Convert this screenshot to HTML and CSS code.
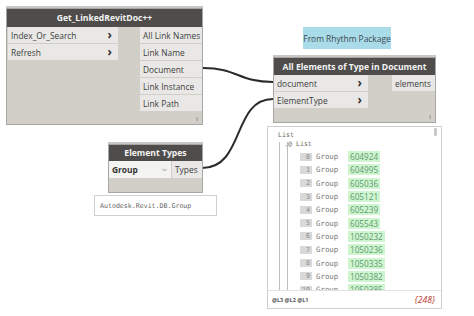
FILE: index.html
```html
<!DOCTYPE html>
<html lang="en">
<head>
  <meta charset="UTF-8" />
  <title>Dynamo Graph</title>
  <link rel="stylesheet" href="styles.css">
</head>
<body>
  <div class="canvas">
    <svg class="wires" width="474" height="316">
      <path d="M203,68 C238,68 238,82 273,82" />
      <path d="M202,168 C245,168 232,99 273,99" />
    </svg>

    <div class="note note-rhythm">From Rhythm Package</div>

    <div class="node node-linked">
      <div class="node-head">Get_LinkedRevitDoc++</div>
      <div class="node-body">
        <div class="ports-in">
          <div class="port-in">Index_Or_Search <span class="chev">&#x203A;</span></div>
          <div class="port-in">Refresh <span class="chev">&#x203A;</span></div>
        </div>
        <div class="ports-out">
          <div class="port-out">All Link Names</div>
          <div class="port-out">Link Name</div>
          <div class="port-out">Document</div>
          <div class="port-out">Link Instance</div>
          <div class="port-out">Link Path</div>
        </div>
      </div>
      <div class="lace">I</div>
    </div>

    <div class="node node-elements">
      <div class="node-head">All Elements of Type in Document</div>
      <div class="node-body">
        <div class="ports-in">
          <div class="port-in">document <span class="chev">&#x203A;</span></div>
          <div class="port-in">ElementType <span class="chev">&#x203A;</span></div>
        </div>
        <div class="ports-out">
          <div class="port-out">elements</div>
        </div>
      </div>
      <div class="lace">I</div>
    </div>

    <div class="node node-types">
      <div class="node-head">Element Types</div>
      <div class="node-body">
        <div class="dropdown">Group
          <svg class="caret" width="5" height="4" viewBox="0 0 5 4"><path d="M0.5,0.8 L2.5,3 L4.5,0.8" /></svg>
        </div>
        <div class="port-out">Types</div>
      </div>
    </div>
    <div class="preview preview-types">Autodesk.Revit.DB.Group</div>

    <div class="watch">
      <div class="watch-list">
        <div class="tree-line line-a"></div>
        <div class="tree-line line-b"></div>
        <div class="list-title">List</div>
        <div class="list-sub"><span class="toggle">&#x2304;</span>@ List</div>
        <div class="items" id="items"></div>
      </div>
      <div class="scroll-thumb"></div>
      <div class="watch-foot">
        <span class="levels">@L3 @L2 @L1</span>
        <span class="count">{248}</span>
      </div>
    </div>
  </div>

  <script>
    const ids = [604924, 604995, 605036, 605121, 605239, 605543, 1050232, 1050236, 1050335, 1050382, 1050385];
    const itemsEl = document.getElementById("items");

    ids.forEach((id, i) => {
      const row = document.createElement("div");
      row.className = "item";
      row.innerHTML = `
        <span class="idx">${i}</span>
        <span class="kind">Group</span>
        <span class="val">${id}</span>
      `;
      itemsEl.appendChild(row);
    });
  </script>
</body>
</html>
```

FILE: styles.css
```css
body {
  margin: 0;
  background: #fff;
  font-family: "Open Sans", "Noto Sans", sans-serif;
}

.canvas {
  position: relative;
  width: 474px;
  height: 316px;
  overflow: hidden;
}

.wires {
  position: absolute;
  left: 0;
  top: 0;
}

.wires path {
  fill: none;
  stroke: #2b2b2b;
  stroke-width: 2;
}

.note {
  position: absolute;
  background: #a9dbe9;
  color: #3b4a50;
  font-size: 8.4px;
  display: flex;
  align-items: center;
  justify-content: center;
}

.note-rhythm {
  left: 303px;
  top: 27px;
  width: 88px;
  height: 22px;
}

/* nodes */
.node {
  position: absolute;
  background: #d2cec8;
  border: 1px solid #a8a6a2;
  box-shadow: 0 -2px 0 #c9c7c4;
  display: flex;
  flex-direction: column;
}

.node-head {
  background: #4f4d4b;
  color: #f3f3f3;
  font-weight: bold;
  font-size: 8.6px;
  height: 17px;
  display: flex;
  align-items: center;
  justify-content: center;
  white-space: nowrap;
}

.node-body {
  display: flex;
  justify-content: space-between;
  align-items: flex-start;
}

.ports-in,
.ports-out {
  display: flex;
  flex-direction: column;
  gap: 1px;
}

.port-in,
.port-out {
  background: #e9e8e6;
  color: #404040;
  font-size: 8.4px;
  height: 16px;
  display: flex;
  align-items: center;
  white-space: nowrap;
}

.port-in {
  justify-content: space-between;
  padding: 0 6px 0 3px;
}

.port-out {
  padding: 0 3px;
}

.chev {
  font-weight: bold;
  font-size: 12px;
  color: #333;
  line-height: 1;
}

.lace {
  position: absolute;
  right: 4px;
  bottom: 1px;
  font-size: 6px;
  color: #555;
}

.node-linked {
  left: 6px;
  top: 8px;
  width: 195px;
  height: 115px;
}

.node-linked .node-head {
  height: 18px;
}

.node-linked .ports-in {
  width: 110px;
  padding-left: 1px;
}

.node-linked .ports-out {
  width: 62px;
}

.node-elements {
  left: 273px;
  top: 57px;
  width: 161px;
  height: 64px;
}

.node-elements .ports-in {
  width: 94px;
}

.node-elements .ports-out {
  width: 43px;
}

.node-types {
  left: 108px;
  top: 144px;
  width: 93px;
  height: 47px;
}

.node-types .node-head {
  height: 16px;
}

.dropdown {
  background: #f3f3f2;
  color: #333;
  font-weight: bold;
  font-size: 8.4px;
  height: 17px;
  width: 62px;
  padding: 0 4px 0 3px;
  display: flex;
  align-items: center;
  justify-content: space-between;
  box-sizing: border-box;
}

.caret path {
  fill: none;
  stroke: #999;
  stroke-width: 1;
}

.node-types .port-out {
  height: 17px;
  margin-left: 1px;
  flex: 1;
}

.preview {
  position: absolute;
  border: 1px solid #cfcfcf;
  background: #fff;
  font-family: "DejaVu Sans Mono", monospace;
  font-size: 6.6px;
  color: #666;
  display: flex;
  align-items: center;
  padding-left: 5px;
  box-sizing: border-box;
}

.preview-types {
  left: 94px;
  top: 195px;
  width: 123px;
  height: 21px;
}

/* watch list */
.watch {
  position: absolute;
  left: 267px;
  top: 126px;
  width: 175px;
  height: 183px;
  border: 1px solid #cfcfcf;
  background: #fff;
  box-sizing: border-box;
  display: flex;
  flex-direction: column;
}

.watch-list {
  position: relative;
  flex: 1;
  overflow: hidden;
  padding: 4px 0 0 10px;
  font-family: "DejaVu Sans Mono", monospace;
  font-size: 6.6px;
  color: #666;
}

.tree-line {
  position: absolute;
  top: 15px;
  bottom: 0;
  width: 1px;
  background: #bdbdbd;
}

.line-a {
  left: 11px;
}

.line-b {
  left: 19px;
}

.list-title {
  height: 9px;
}

.list-sub {
  padding-left: 7px;
  height: 10px;
}

.toggle {
  font-size: 5px;
  color: #777;
}

.items {
  padding-left: 22px;
}

.item {
  display: flex;
  align-items: center;
  height: 13.3px;
  gap: 4px;
}

.idx {
  background: #d9d9d9;
  color: #888;
  width: 12px;
  height: 8px;
  line-height: 8px;
  text-align: right;
  padding-right: 2px;
  box-sizing: border-box;
}

.kind {
  width: 28px;
  color: #777;
  font-size: 7.4px;
}

.val {
  background: #cff5cf;
  color: #5e9a72;
  font-family: "Open Sans", sans-serif;
  font-size: 8.2px;
  padding: 0 2px;
  height: 11px;
  line-height: 11px;
}

.scroll-thumb {
  position: absolute;
  right: 4px;
  top: 1px;
  width: 3px;
  height: 8px;
  background: #c9c9c9;
  border-radius: 1px;
}

.watch-foot {
  height: 17px;
  border-top: 1px solid #e2e2e2;
  display: flex;
  align-items: center;
  justify-content: space-between;
  padding: 0 6px 0 4px;
}

.levels {
  font-size: 5.5px;
  font-weight: bold;
  color: #555;
}

.count {
  font-style: italic;
  font-size: 8.6px;
  color: #c0392b;
}
```
